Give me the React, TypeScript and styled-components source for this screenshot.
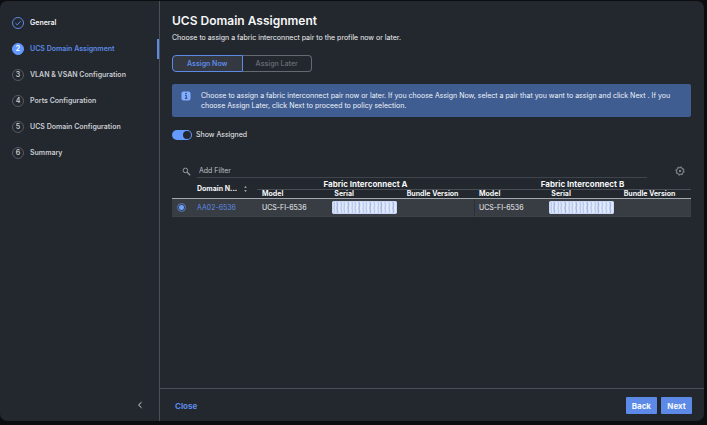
import React, { useState } from "react";
import styled, { createGlobalStyle, css } from "styled-components";

const GlobalStyle = createGlobalStyle`
  *, *::before, *::after { box-sizing: border-box; }
  html, body, #root { height: 100%; }
  body {
    margin: 0;
    background: #0b0d11;
    color: #f0f1f3;
    font-family: Inter, "Liberation Sans", sans-serif;
    font-size: 7px;
    line-height: 10px;
  }
  button, input { font: inherit; color: inherit; margin: 0; }
  button { cursor: pointer; }
`;

const Page = styled.div`
  height: 100%;
  padding: 1px 3px 4px 0;
`;

const Dialog = styled.div`
  display: flex;
  height: 100%;
  background: #23272e;
  border-radius: 7px;
  overflow: hidden;
`;

const Sidebar = styled.aside`
  flex: 0 0 160px;
  display: flex;
  flex-direction: column;
  justify-content: space-between;
  border-right: 1px solid #4a4f57;
`;

const Steps = styled.ol`
  list-style: none;
  margin: 0;
  padding: 12px 0 0;
  display: flex;
  flex-direction: column;
  gap: 6px;
`;

type StepState = "done" | "current" | "todo";

const Step = styled.li<{ $state: StepState }>`
  display: flex;
  align-items: center;
  gap: 6px;
  height: 20px;
  padding-left: 12px;
  font-weight: 600;
  color: #c8ccd1;
  ${(p) => p.$state === "done" && css`color: #f5f6f7;`}
  ${(p) => p.$state === "current" && css`
    color: #5c8ae6;
    border-right: 2px solid #5c8ae6;
  `}
`;

const StepNumber = styled.span<{ $state: StepState }>`
  display: grid;
  place-items: center;
  width: 12px;
  height: 12px;
  border-radius: 50%;
  border: 1px solid #555a62;
  ${(p) => p.$state === "done" && css`border-color: #5c8ae6; color: #5c8ae6;`}
  ${(p) => p.$state === "current" && css`
    border-color: #649aff;
    background: #649aff;
    color: #ffffff;
  `}
`;

const Collapse = styled.button`
  align-self: flex-end;
  display: grid;
  place-items: center;
  width: 14px;
  height: 14px;
  margin: 0 12px 9px 0;
  padding: 0;
  border: 0;
  background: none;
  color: #d5d8dc;
`;

const Main = styled.main`
  flex: 1;
  min-width: 0;
  display: flex;
  flex-direction: column;
`;

const Content = styled.div`
  flex: 1;
  padding: 12px 13px 0 12px;
`;

const Title = styled.h1`
  margin: 0;
  font-size: 12px;
  line-height: 16px;
  font-weight: 600;
  color: #f5f6f7;
`;

const Intro = styled.p`
  margin: 4px 0 12px;
`;

const Segments = styled.div`
  display: flex;
  width: 140px;
  height: 17px;
`;

const Segment = styled.button<{ $active: boolean }>`
  flex: 1;
  padding: 0;
  font-weight: 600;
  color: #62676f;
  background: transparent;
  border: 1px solid #656a72;
  &:first-child { border-radius: 4px 0 0 4px; }
  &:last-child { border-radius: 0 4px 4px 0; border-left-width: 0; }
  ${(p) => p.$active && css`
    color: #5c8ae6;
    background: #343941;
    border-color: #5c8ae6;
  `}
`;

const Banner = styled.div`
  display: flex;
  gap: 10px;
  margin-top: 12px;
  padding: 7px 16px 6px 9px;
  border-radius: 2px;
  background: #3f5d91;
`;

const BannerIcon = styled.svg`
  flex: none;
  width: 10px;
  height: 10px;
`;

const BannerText = styled.p`
  margin: 0;
  color: #eef2f9;
`;

const SwitchLabel = styled.label`
  display: flex;
  align-items: center;
  gap: 4px;
  width: fit-content;
  margin-top: 13px;
  cursor: pointer;
`;

const Switch = styled.input`
  appearance: none;
  display: flex;
  align-items: center;
  width: 20px;
  height: 10px;
  padding: 0 1px;
  border-radius: 5px;
  background: #555a62;
  &::before {
    content: "";
    width: 8px;
    height: 8px;
    border-radius: 50%;
    background: #23272e;
  }
  &:checked { background: #649aff; justify-content: flex-end; }
`;

const FilterBar = styled.div`
  display: flex;
  align-items: center;
  margin-top: 24px;
  padding: 0 6px 0 10px;
  color: #969aa1;
`;

const FilterInput = styled.input`
  flex: 1;
  min-width: 0;
  height: 14px;
  margin: 0 28px 0 6px;
  padding: 0 2px;
  border: 0;
  border-bottom: 1px solid #40454d;
  border-radius: 0;
  background: none;
  outline: none;
  &::placeholder { color: #bfc3c9; opacity: 1; }
`;

const IconButton = styled.button`
  display: grid;
  place-items: center;
  width: 10px;
  height: 10px;
  padding: 0;
  border: 0;
  background: none;
`;

const Table = styled.table`
  width: 100%;
  margin-top: 1px;
  table-layout: fixed;
  border-collapse: separate;
  border-spacing: 0;
  text-align: left;
  thead tr:last-child th, thead th[rowspan] { border-bottom: 1px solid #a3a8ae; }
`;

const Column = styled.col<{ $width?: number }>`
  ${(p) => p.$width && css`width: ${p.$width}px;`}
`;

const Head = styled.th`
  padding: 0 0 0 5px;
  line-height: 8px;
  font-weight: 700;
  color: #f5f6f7;
  white-space: nowrap;
`;

const GroupHead = styled(Head)`
  padding: 0;
  font-size: 8px;
  line-height: 10px;
  text-align: center;
  border-bottom: 1px solid #4a4f57;
`;

const NameHead = styled.div`
  display: flex;
  align-items: center;
  justify-content: space-between;
  padding-right: 9px;
`;

const Cell = styled.td<{ $divider?: boolean }>`
  height: 18px;
  padding: 0 0 0 5px;
  background: #383d43;
  border-bottom: 1px solid #3d4248;
  vertical-align: middle;
  ${(p) => p.$divider && css`border-left: 1px solid #2b3037; padding-left: 4px;`}
`;

const RadioCell = styled(Cell)`
  padding: 0 5px;
`;

const Radio = styled.input`
  appearance: none;
  display: block;
  width: 9px;
  height: 9px;
  border: 1px solid #5478bd;
  border-radius: 50%;
  &:checked { background: radial-gradient(circle, #6ea0ff 2px, transparent 3px); }
`;

const DomainLink = styled.a`
  color: #5c8ae6;
  text-decoration: none;
`;

const SerialCell = styled(Cell)`
  padding-left: 3px;
`;

const Redacted = styled.svg`
  display: block;
  width: 65px;
  height: 13px;
  border-radius: 2px;
`;

const Footer = styled.footer`
  display: flex;
  align-items: center;
  gap: 4px;
  padding: 8px 12px 7px;
  border-top: 1px solid #4a4f57;
`;

const TextButton = styled.button`
  margin-right: auto;
  padding: 0 3px;
  border: 0;
  background: none;
  font-size: 8px;
  font-weight: 700;
  color: #5c8ae6;
`;

const PrimaryButton = styled.button`
  min-width: 31px;
  height: 17px;
  padding: 0 6px;
  border: 0;
  border-radius: 1px;
  background: #5c8ae6;
  font-size: 8px;
  font-weight: 700;
  color: #f5f8ff;
`;

const steps: { label: string; state: StepState }[] = [
  { label: "General", state: "done" },
  { label: "UCS Domain Assignment", state: "current" },
  { label: "VLAN & VSAN Configuration", state: "todo" },
  { label: "Ports Configuration", state: "todo" },
  { label: "UCS Domain Configuration", state: "todo" },
  { label: "Summary", state: "todo" },
];

const stripes = [2, 5, 9, 12, 16, 20, 23, 27, 31, 34, 38, 42, 46, 49, 53, 57, 61];

function HiddenSerial() {
  return (
    <Redacted viewBox="0 0 65 13" role="img" aria-label="Hidden serial">
      <rect width="65" height="13" fill="#e2eafc" />
      {stripes.map((x, i) => (
        <path
          key={x}
          d={`M${x} 1l.6 3-.6 3 .6 3-.4 2`}
          fill="none"
          stroke={i % 3 === 1 ? "#a3b9e6" : "#bccbec"}
          strokeWidth="1.5"
        />
      ))}
      <rect x=".5" y=".5" width="64" height="12" rx="1.5" fill="none" stroke="#c9d7f5" />
    </Redacted>
  );
}

export default function App() {
  const [assignNow, setAssignNow] = useState(true);
  const [showAssigned, setShowAssigned] = useState(true);

  return (
    <>
      <GlobalStyle />
      <Page>
        <Dialog>
          <Sidebar>
            <Steps>
              {steps.map((step, i) => (
                <Step key={step.label} $state={step.state}>
                  <StepNumber $state={step.state}>
                    {step.state === "done" ? (
                      <svg width="8" height="8" viewBox="0 0 8 8" fill="none" stroke="currentColor">
                        <path d="M1.5 4.2l1.8 1.7L6.6 2.2" />
                      </svg>
                    ) : (
                      i + 1
                    )}
                  </StepNumber>
                  {step.label}
                </Step>
              ))}
            </Steps>
            <Collapse aria-label="Collapse steps">
              <svg width="6" height="8" viewBox="0 0 6 8" fill="none" stroke="currentColor">
                <path d="M4.5 1.2L1.6 4l2.9 2.8" />
              </svg>
            </Collapse>
          </Sidebar>
          <Main>
            <Content>
              <Title>UCS Domain Assignment</Title>
              <Intro>Choose to assign a fabric interconnect pair to the profile now or later.</Intro>
              <Segments role="group" aria-label="Assignment time">
                <Segment $active={assignNow} aria-pressed={assignNow} onClick={() => setAssignNow(true)}>
                  Assign Now
                </Segment>
                <Segment $active={!assignNow} aria-pressed={!assignNow} onClick={() => setAssignNow(false)}>
                  Assign Later
                </Segment>
              </Segments>
              <Banner>
                <BannerIcon viewBox="0 0 10 10">
                  <rect x=".5" y=".5" width="9" height="9" rx="2" fill="#83adff" />
                  <path d="M4.1 4.4h1.2v3M3.9 7.3h2.4" fill="none" stroke="#2c4779" />
                  <circle cx="5" cy="2.6" r=".8" fill="#2c4779" />
                </BannerIcon>
                <BannerText>
                  Choose to assign a fabric interconnect pair now or later. If you choose Assign Now, select a pair
                  that you want to assign and click Next . If you choose Assign Later, click Next to proceed to
                  policy selection.
                </BannerText>
              </Banner>
              <SwitchLabel>
                <Switch
                  type="checkbox"
                  role="switch"
                  checked={showAssigned}
                  onChange={(e) => setShowAssigned(e.target.checked)}
                />
                Show Assigned
              </SwitchLabel>
              <FilterBar>
                <svg width="9" height="9" viewBox="0 0 9 9" fill="none" stroke="currentColor">
                  <circle cx="3.4" cy="3.4" r="2.3" />
                  <path d="M5.2 5.2l3 3" strokeWidth="1.3" />
                </svg>
                <FilterInput type="text" placeholder="Add Filter" aria-label="Add Filter" />
                <IconButton aria-label="Table settings">
                  <svg width="10" height="10" viewBox="0 0 10 10" fill="none" stroke="currentColor">
                    <circle cx="5" cy="5" r="3.5" strokeWidth=".9" />
                    <circle cx="5" cy="5" r="4.2" strokeWidth=".8" strokeDasharray="1.6 1.7" />
                    <circle cx="5" cy="5" r="1.1" fill="currentColor" stroke="none" />
                  </svg>
                </IconButton>
              </FilterBar>
              <Table>
                <colgroup>
                  <Column $width={20} />
                  <Column $width={65} />
                  <Column />
                  <Column />
                  <Column />
                  <Column />
                  <Column />
                  <Column />
                </colgroup>
                <thead>
                  <tr>
                    <Head rowSpan={2} aria-label="Selection" />
                    <Head rowSpan={2} scope="col">
                      <NameHead>
                        Domain N...
                        <svg width="5" height="8" viewBox="0 0 5 8" fill="#b9bdc3">
                          <path d="M2.5 1L3.8 2.8H1.2zM2.5 7L1.2 5.2h2.6z" />
                        </svg>
                      </NameHead>
                    </Head>
                    <GroupHead colSpan={3} scope="colgroup">Fabric Interconnect A</GroupHead>
                    <GroupHead colSpan={3} scope="colgroup">Fabric Interconnect B</GroupHead>
                  </tr>
                  <tr>
                    {["A", "B"].map((side) => (
                      <React.Fragment key={side}>
                        <Head scope="col">Model</Head>
                        <Head scope="col">Serial</Head>
                        <Head scope="col">Bundle Version</Head>
                      </React.Fragment>
                    ))}
                  </tr>
                </thead>
                <tbody>
                  <tr>
                    <RadioCell>
                      <Radio type="radio" name="domain" defaultChecked aria-label="AA02-6536" />
                    </RadioCell>
                    <Cell>
                      <DomainLink href="#AA02-6536">AA02-6536</DomainLink>
                    </Cell>
                    <Cell>UCS-FI-6536</Cell>
                    <SerialCell>
                      <HiddenSerial />
                    </SerialCell>
                    <Cell />
                    <Cell $divider>UCS-FI-6536</Cell>
                    <SerialCell>
                      <HiddenSerial />
                    </SerialCell>
                    <Cell />
                  </tr>
                </tbody>
              </Table>
            </Content>
            <Footer>
              <TextButton>Close</TextButton>
              <PrimaryButton>Back</PrimaryButton>
              <PrimaryButton>Next</PrimaryButton>
            </Footer>
          </Main>
        </Dialog>
      </Page>
    </>
  );
}
